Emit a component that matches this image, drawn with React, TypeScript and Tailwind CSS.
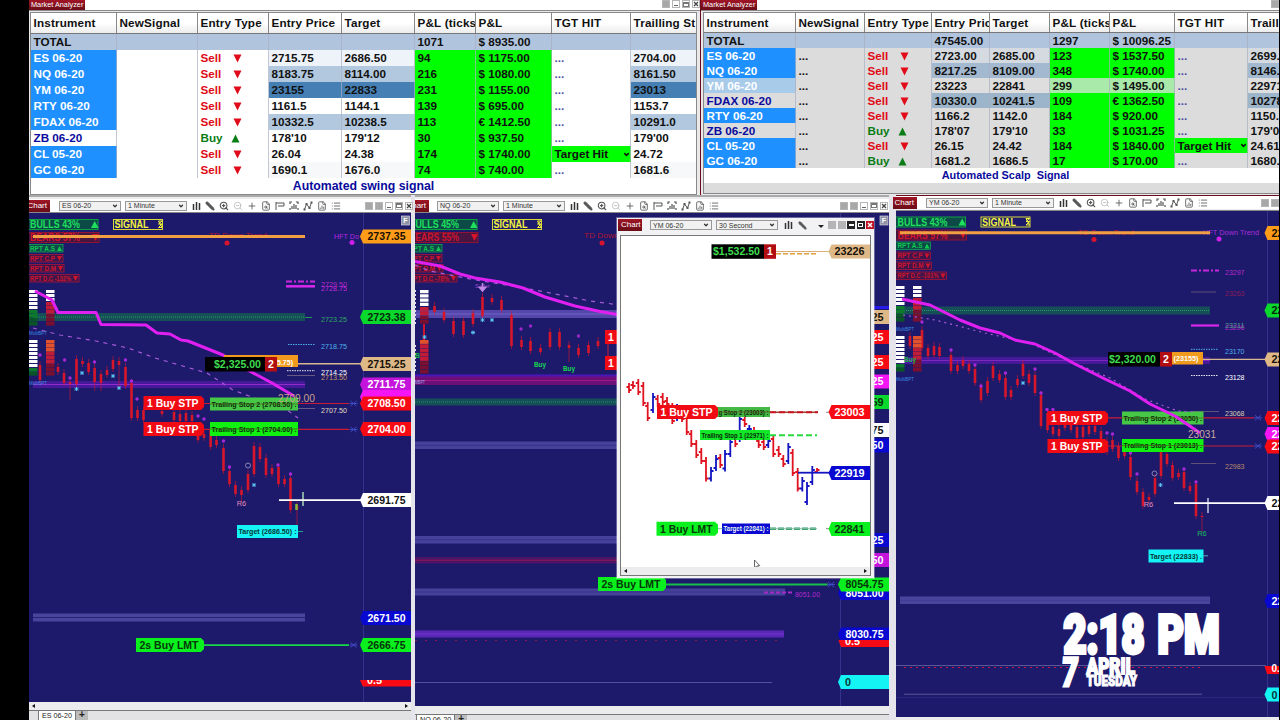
import React from 'react'
import { ChevronDown, FileChartColumn, FileSearch, List, Pencil, Plus, ZoomIn, ZoomOut } from 'lucide-react'

type Point = [number, number]
type Candle = [x: number, top: number, bottom: number, low?: number]

const FONT = '"Liberation Sans", Arial, sans-serif'
const NAVY = '#1d1a6c'

/* ---------- market analyzer tables ---------- */

interface Row {
    name: string
    side: 'Sell' | 'Buy'
    entry: string
    target: string
    ticks: string
    pnl: string
    hit?: boolean
    stop: string
    nameStyle: string
    tint: string
    pnlStyle?: string
}

const BLUE = 'bg-[#1e90ff] text-white'
const GREEN = 'bg-[#00ff00]'

const swingRows: Row[] = [
    { name: 'ES 06-20', side: 'Sell', entry: '2715.75', target: '2686.50', ticks: '94', pnl: '$ 1175.00', stop: '2704.00', nameStyle: BLUE, tint: 'bg-[#eef3fa]' },
    { name: 'NQ 06-20', side: 'Sell', entry: '8183.75', target: '8114.00', ticks: '216', pnl: '$ 1080.00', stop: '8161.50', nameStyle: BLUE, tint: 'bg-[#b2c8de]' },
    { name: 'YM 06-20', side: 'Sell', entry: '23155', target: '22833', ticks: '231', pnl: '$ 1155.00', stop: '23013', nameStyle: BLUE, tint: 'bg-[#457fb3]' },
    { name: 'RTY 06-20', side: 'Sell', entry: '1161.5', target: '1144.1', ticks: '139', pnl: '$ 695.00', stop: '1153.7', nameStyle: BLUE, tint: 'bg-white' },
    { name: 'FDAX 06-20', side: 'Sell', entry: '10332.5', target: '10238.5', ticks: '113', pnl: '€ 1412.50', stop: '10291.0', nameStyle: BLUE, tint: 'bg-[#b2c8de]' },
    { name: 'ZB 06-20', side: 'Buy', entry: "178'10", target: "179'12", ticks: '30', pnl: '$ 937.50', stop: "179'00", nameStyle: 'bg-white text-[#0a0a9c]', tint: 'bg-white' },
    { name: 'CL 05-20', side: 'Sell', entry: '26.04', target: '24.38', ticks: '174', pnl: '$ 1740.00', hit: true, stop: '24.72', nameStyle: BLUE, tint: 'bg-white' },
    { name: 'GC 06-20', side: 'Sell', entry: '1690.1', target: '1676.0', ticks: '74', pnl: '$ 740.00', stop: '1681.6', nameStyle: BLUE, tint: 'bg-[#f7f8f9]' },
]

const scalpRows: Row[] = [
    { name: 'ES 06-20', side: 'Sell', entry: '2723.00', target: '2685.00', ticks: '123', pnl: '$ 1537.50', stop: '2699.', nameStyle: BLUE, tint: 'bg-[#d5dae0]' },
    { name: 'NQ 06-20', side: 'Sell', entry: '8217.25', target: '8109.00', ticks: '348', pnl: '$ 1740.00', stop: '8146.', nameStyle: BLUE, tint: 'bg-[#a3b9cf]' },
    { name: 'YM 06-20', side: 'Sell', entry: '23223', target: '22841', ticks: '299', pnl: '$ 1495.00', stop: '22971', nameStyle: 'bg-[#a9cbea] text-white', tint: 'bg-[#dedede]', pnlStyle: 'bg-[#a9e9a9]' },
    { name: 'FDAX 06-20', side: 'Sell', entry: '10330.0', target: '10241.5', ticks: '109', pnl: '€ 1362.50', stop: '10278', nameStyle: 'text-[#0a0a9c]', tint: 'bg-[#9db5ca]' },
    { name: 'RTY 06-20', side: 'Sell', entry: '1166.2', target: '1142.0', ticks: '184', pnl: '$ 920.00', stop: '1150.', nameStyle: BLUE, tint: '' },
    { name: 'ZB 06-20', side: 'Buy', entry: "178'07", target: "179'10", ticks: '33', pnl: '$ 1031.25', stop: "179'0", nameStyle: 'text-[#0a0a9c]', tint: '' },
    { name: 'CL 05-20', side: 'Sell', entry: '26.15', target: '24.42', ticks: '184', pnl: '$ 1840.00', hit: true, stop: '24.61', nameStyle: BLUE, tint: '' },
    { name: 'GC 06-20', side: 'Buy', entry: '1681.2', target: '1686.5', ticks: '17', pnl: '$ 170.00', stop: '1680.', nameStyle: BLUE, tint: '' },
]

const headers = ['Instrument', 'NewSignal', 'Entry Type', 'Entry Price', 'Target', 'P&L (ticks)', 'P&L', 'TGT HIT', 'Trailling St']

const Cell: React.FC<{ className?: string; children?: React.ReactNode }> = ({ className = '', children }) => (
    <div className={`overflow-hidden whitespace-pre border-r border-[#a9aec0]/70 pl-[2.5px] ${className}`}>{children}</div>
)

interface AnalyzerProps {
    rows: Row[]
    cols: string
    rowClass: string
    headClass: string
    total: [string, string, string]
    signal: string
    signalClass: string
    bodyClass: string
}

const AnalyzerTable: React.FC<AnalyzerProps> = ({ rows, cols, rowClass, headClass, total, signal, signalClass, bodyClass }) => (
    <div className="overflow-hidden text-[11.7px] font-bold text-[#111]">
        <div className={`grid ${cols} ${headClass} border-b border-[#777] bg-gradient-to-b from-white from-50% to-[#ececec] tracking-[0.18px]`}>
            {headers.map((h) => <Cell key={h} className="border-[#888]!">{h}</Cell>)}
        </div>
        <div className={`grid ${cols} ${rowClass} bg-[#b0c4de]`}>
            <Cell>TOTAL</Cell><Cell /><Cell />
            <Cell>{total[0]}</Cell>
            <Cell />
            <Cell>{total[1]}</Cell>
            <Cell>{total[2]}</Cell>
            <Cell /><Cell />
        </div>
        <div className={bodyClass}>
            {rows.map((r) => (
                <div key={r.name} className={`grid ${cols} ${rowClass}`}>
                    <Cell className={r.nameStyle}>{r.name}</Cell>
                    <Cell>{bodyClass === 'bg-white' ? '' : '...'}</Cell>
                    <Cell className={r.side === 'Sell' ? 'text-[#e00a18]' : 'text-[#0a7d14]'}>
                        {r.side}
                        <svg className={`inline ${r.side === 'Sell' ? 'ml-3' : 'ml-2'}`} width="9" height="9" viewBox="0 0 9 9">
                            <path d={r.side === 'Sell' ? 'M.5 .5h8L4.5 8.5z' : 'M.5 8.5h8L4.5 .5z'} fill="currentColor" />
                        </svg>
                    </Cell>
                    <Cell className={r.tint}>{r.entry}</Cell>
                    <Cell className={r.tint}>{r.target}</Cell>
                    <Cell className={r.pnlStyle ?? GREEN}>{r.ticks}</Cell>
                    <Cell className={r.pnlStyle ?? GREEN}>{r.pnl}</Cell>
                    <Cell className={r.hit ? `${GREEN} flex items-center justify-between` : 'text-[#4a4aa0]'}>
                        {r.hit ? <>Target Hit<ChevronDown size={7} strokeWidth={5} className="shrink-0" /></> : '...'}
                    </Cell>
                    <Cell className={r.tint}>{r.stop}</Cell>
                </div>
            ))}
        </div>
        <div className={`${rowClass} ${signalClass} bg-white text-center whitespace-pre text-[#0a0a9c]`}>{signal}</div>
    </div>
)

type ButtonKind = 'blank' | 'min' | 'max' | 'close'

const WindowButtons: React.FC<{ kinds: ButtonKind[] }> = ({ kinds }) => (
    <div className="flex gap-[2px]">
        {kinds.map((k, i) => (
            <div
                key={i}
                className={`flex h-[8px] w-[8px] items-center justify-center border border-[#b5b5b5] ${k === 'blank' ? 'bg-[#a8a8a8]' : 'bg-white'}`}
            >
                {k === 'min' && <span className="mt-[3px] h-px w-1 bg-[#666]" />}
                {k === 'max' && <span className="h-[5px] w-[6px] border border-t-2 border-[#777]" />}
                {k === 'close' && <svg width="6" height="6" viewBox="0 0 6 6"><path d="M1 1l4 4M5 1L1 5" stroke="#444" strokeWidth="1.3" /></svg>}
            </div>
        ))}
    </div>
)

const WindowTitle: React.FC<{ kinds: ButtonKind[] }> = ({ kinds }) => (
    <div className="flex h-[11px] shrink-0 items-start justify-between border-b border-[#8a8a8a] bg-white">
        <div className="h-[10px] w-[56px] bg-gradient-to-b from-[#a01526] to-[#6b0d18] pl-[2px] text-[7.3px] leading-[9px] whitespace-nowrap text-white">Market Analyzer</div>
        <WindowButtons kinds={kinds} />
    </div>
)

/* ---------- chart toolbar ---------- */

const Select: React.FC<{ label: string }> = ({ label }) => (
    <div className="flex h-[10px] w-[62px] shrink-0 items-center justify-between border border-[#999] bg-[#f1f1f1] pr-[2px] pl-[2px] text-[7px] leading-none text-[#333]">
        <span>{label}</span>
        <ChevronDown size={6} strokeWidth={5} />
    </div>
)

const Bars = () => (
    <svg width="9" height="10" viewBox="0 0 9 10"><path d="M1.5 3v6M4.5 1v8M7.5 2v7" stroke="#333" strokeWidth="1.5" /></svg>
)

const Tools = () => (
    <div className="flex shrink-0 items-center gap-[4px] text-[#555]">
        <Bars />
        <Pencil className="-scale-x-100" size={10} fill="currentColor" />
        <ZoomIn size={10} strokeWidth={2.6} />
        <ZoomOut size={10} className="text-[#bbb]" />
        <Plus size={10} strokeWidth={2} />
        <FileSearch size={10} />
        <svg width="10" height="10" viewBox="0 0 10 10"><path d="M1 9V1M1 2h8v3H3" fill="none" stroke="currentColor" /></svg>
        <svg width="10" height="10" viewBox="0 0 10 10"><path d="M1 3V1h2M7 1h2v2M1 7v2M9 7v2M3 8V5M5 8V3M7 8V4" fill="none" stroke="currentColor" strokeWidth="1.2" /></svg>
        <svg width="10" height="10" viewBox="0 0 10 10">
            <path d="M1.500 8.500L3.500 3l3 4 2-5.500" fill="none" stroke="currentColor" />
            <path d="M.5 7.500h2v2h-2zM2.500 2h2v2h-2zM5.500 6h2v2h-2zM7.500 .5h2v2h-2z" fill="currentColor" />
        </svg>
        <FileChartColumn size={10} />
        <List size={10} />
    </div>
)

interface ToolbarProps {
    symbol: string
    tab: string
    selects: string
    right: string
    kinds: ButtonKind[]
}

const Toolbar: React.FC<ToolbarProps> = ({ symbol, tab, selects, right, kinds }) => (
    <div className="flex h-[13px] shrink-0 items-center bg-white">
        <div className={`${tab} flex h-[12px] shrink-0 justify-end overflow-hidden bg-gradient-to-b from-[#a01526] to-[#6b0d18] pr-[3px] text-[8px] leading-[12px] text-white`}>
            Chart
        </div>
        <div className={`${selects} flex gap-[4px]`}>
            <Select label={symbol} />
            <Select label="1 Minute" />
        </div>
        <div className="ml-[5px]"><Tools /></div>
        <div className={`${right} ml-auto`}><WindowButtons kinds={kinds} /></div>
    </div>
)

/* ---------- chart primitives ---------- */

interface LabelProps {
    x: number
    y: number
    w?: number
    size?: number
    fill?: string
    bold?: boolean
    anchor?: 'start' | 'middle' | 'end'
    children: string
}

const Label: React.FC<LabelProps> = ({ x, y, w, size = 7.3, fill = '#fff', bold, anchor = 'start', children }) => (
    <text x={x} y={y} textLength={w} lengthAdjust="spacingAndGlyphs" fontSize={size} fill={fill} fontWeight={bold ? 700 : 400} textAnchor={anchor}>{children}</text>
)

const PriceTag: React.FC<{ x: number; y: number; right: number; fill: string; color?: string; text?: string; h?: number }> = ({ x, y, right, fill, color = '#fff', text = '', h = 14 }) => (
    <g>
        <path d={`M${x} ${y + h / 2}l3 ${-h / 2}H${right}v${h}H${x + 3}z`} fill={fill} />
        {text && <Label x={right - 5.5} y={y + h / 2 + 3.9} w={text.length === 7 ? 38 : undefined} size={10.8} bold fill={color} anchor="end">{text}</Label>}
    </g>
)

const OrderLabel: React.FC<{ x: number; y: number; right: number; fill: string; color?: string; text: string }> = ({ x, y, right, fill, color = '#fff', text }) => (
    <g>
        <path d={`M${x} ${y}H${right - 3}l3 3v8l-3 3H${x}z`} fill={fill} />
        <Label x={x + 3.5} y={y + 11} w={right - x - 9} size={10.8} bold fill={color}>{text}</Label>
    </g>
)

const StopBox: React.FC<{ x: number; y: number; w: number; h?: number; fill: string; color?: string; text: string; line?: string }> = ({ x, y, w, h = 13, fill, color = '#0a2a0a', text, line }) => (
    <g>
        <rect x={x} y={y} width={w} height={h} fill={fill} />
        <Label x={x + 1.5} y={y + h / 2 + 2.7} w={w - 3} size={7.3} bold fill={color}>{text}</Label>
        {line && <path d={`M${x} ${y + h / 2}h${w}`} stroke={line} strokeWidth=".7" />}
    </g>
)

const Profit: React.FC<{ x: number; y: number; w: number; text: string; qty: string }> = ({ x, y, w, text, qty }) => (
    <g>
        <rect x={x} y={y} width={w} height="14.5" fill="#000" />
        <rect x={x + w} y={y} width="12" height="14.5" fill="#b30d14" />
        <Label x={x + w - 4} y={y + 11} w={47} size={10.5} bold fill="#3fdc50" anchor="end">{text}</Label>
        <Label x={x + w + 6} y={y + 11} size={10.5} bold anchor="middle">{qty}</Label>
    </g>
)

const Band: React.FC<{ x: number; right: number; y: number; h?: number; fill: string; line?: string; dotted?: boolean }> = ({ x, right, y, h = 8, fill, line = NAVY, dotted }) => (
    <g>
        <rect x={x} y={y} width={right - x} height={h} fill={fill} />
        <path d={`M${x} ${y + h / 2}H${right}`} stroke={line} strokeDasharray={dotted ? '1 1' : undefined} strokeWidth=".8" />
    </g>
)

const Candles: React.FC<{ data: Candle[] }> = ({ data }) => (
    <g stroke="#d8162a">
        {data.map(([x, top, bottom, low], i) => (
            <g key={i}>
                <path d={`M${x} ${top - 4}V${low ?? bottom + 3}`} strokeWidth=".6" />
                <path d={`M${x} ${top}V${bottom}`} strokeWidth="2.6" />
            </g>
        ))}
    </g>
)

const Dots: React.FC<{ data: Point[]; fill: string }> = ({ data, fill }) => (
    <g fill={fill}>{data.map(([x, y], i) => <circle key={i} cx={x} cy={y} r="1.7" />)}</g>
)

const Stars: React.FC<{ data: Point[] }> = ({ data }) => (
    <g stroke="#5cc8f5" strokeWidth=".9">
        {data.map(([x, y], i) => <path key={i} d={`M${x - 2} ${y}h4M${x} ${y - 2}v4M${x - 1.5} ${y - 1.5}l3 3M${x + 1.5} ${y - 1.5}l-3 3`} />)}
    </g>
)

const CloseMark: React.FC<{ x: number; y: number }> = ({ x, y }) => (
    <path d={`M${x - 3} ${y - 2.5}l6 5M${x + 3} ${y - 2.5}l-6 5M${x - 4} ${y}h8`} stroke="#3f4bc0" />
)

const Trend: React.FC<{ points: string; dashed?: boolean; dash?: string }> = ({ points, dashed, dash = '4 5' }) => (
    <polyline points={points} fill="none" stroke={dashed ? '#a65ad6' : '#e020f0'} strokeWidth={dashed ? 1.2 : 3} strokeDasharray={dashed ? dash : undefined} strokeLinejoin="round" />
)

// Striped strength meter: solid blocks with thin gaps between
const Meter: React.FC<{ x: number; y: number; h: number; colors: string[] }> = ({ x, y, h, colors }) => (
    <g>
        {colors.map((c, i) => (
            <rect key={i} x={x} y={y + (i * h) / colors.length} width="8.5" height={h / colors.length - (c === '#fff' ? 1 : 0.4)} fill={c} />
        ))}
    </g>
)

const W = '#fff'
const G1 = '#0c7a2a'
const G2 = '#0a5526'
const R1 = '#c01c38'
const R2 = '#7a1030'
const O1 = '#e2502c'

const Meters: React.FC<{ x: number; y: number }> = ({ x, y }) => (
    <g>
        <Meter x={x} y={y} h={36} colors={[W, W, W, W, W, G1, G1, G2, G2]} />
        <Meter x={x + 17} y={y} h={36} colors={[W, W, W, R1, R1, R1, R2, R2, R2]} />
        <Meter x={x} y={y + 50} h={36} colors={[W, W, W, W, W, W, W, G1, G2]} />
        <Meter x={x + 17} y={y + 50} h={36} colors={[O1, O1, O1, R1, R1, R1, R2, R2, R2]} />
        <Label x={x} y={y + 45} w={18} size={5.5} fill="#3a8be0">MultiBPT</Label>
        <Label x={x} y={y + 95} w={18} size={5.5} fill="#3a8be0">MultiBPT</Label>
    </g>
)

const badges = [
    { text: 'RPT A.S', w: 34, color: '#12c850', up: true },
    { text: 'RPT C.P', w: 34, color: '#d0142c' },
    { text: 'RPT D.M', w: 35, color: '#d0142c' },
]

// Sentiment block in the chart's upper left corner
const Sentiment: React.FC<{ x: number; y: number; bulls: string; bears: string; dc: string; dcWidth?: number }> = ({ x, y, bulls, bears, dc, dcWidth = 50 }) => (
    <g transform={`translate(${x} ${y})`}>
        <rect x="-1" y=".5" width="70" height="10" fill="#0c4a48" stroke="#11a040" />
        <Label x={1} y={9.3} w={50} size={10.3} bold fill="#1fe05c">{bulls}</Label>
        <path d="M62 9h7.500l-3.800-7z" fill="#1fe05c" />
        <rect x="84.500" y=".5" width="49" height="10" fill="none" stroke="#d8d83c" />
        <Label x={85.5} y={9.3} w={34} size={10.3} bold fill="#f4f43a">SIGNAL</Label>
        <path d="M129.500 2h3.500l-3.500 3h3.500l-3.500 3.500h3.500z" fill="none" stroke="#f4f43a" />
        <rect x="-1" y="13.500" width="71" height="10" fill="#471542" stroke="#8f1434" />
        <Label x={1} y={22.3} w={50} size={10.3} bold fill="#d0142c">{bears}</Label>
        <path d="M63 15h7l-3.500 7z" fill="#d8142c" />
        {[...badges, { text: dc, w: dcWidth, color: '#d0142c', up: false }].map((b, i) => (
            <g key={i} transform={`translate(0 ${25.5 + i * 10})`}>
                <rect x="-1" y="0" width={b.w + 1} height="7.500" fill={b.up ? '#0c4a48' : '#40154a'} stroke={b.color} strokeWidth=".6" />
                <Label x={1} y={6.4} w={b.w - 9} size={6.8} bold fill={b.color}>{b.text}</Label>
                <path d={b.up ? `M${b.w - 6} 6.500h5l-2.500-5z` : `M${b.w - 6} 1.500h5l-2.500 5z`} fill={b.color} />
            </g>
        ))}
    </g>
)

const FButton: React.FC<{ x: number; y: number }> = ({ x, y }) => (
    <g>
        <rect x={x} y={y} width="8" height="9" fill="#8f93a8" stroke="#d5d5e0" strokeWidth=".7" />
        <Label x={x + 4} y={y + 7} size={7} bold anchor="middle">F</Label>
    </g>
)

/* ---------- ES chart ---------- */

const esCandles: Candle[] = [
    [40, 365, 380], [58, 367, 372], [64, 373, 383], [70, 382, 384, 400], [76.5, 359, 384], [82.500, 361, 364], [88.600, 363, 372],
    [94.600, 368, 382, 391], [101, 374, 383, 391], [107, 370, 375], [113, 360, 369], [119, 361, 365, 388], [125.500, 367, 386], [131.500, 383, 418],
    [137.500, 410, 418], [143.500, 410, 420], [162, 411, 414], [174, 412, 420], [180, 414, 421], [186, 413, 421], [192, 415, 421],
    [198, 432, 440], [204, 434, 438], [210.600, 430, 447], [216.500, 440, 445], [223.500, 448, 471], [229.500, 471, 484], [235.500, 485, 494],
    [241.500, 490, 495, 502], [248, 474, 490], [254, 446, 474], [260, 447, 459], [266, 458, 475], [272, 468, 474], [278.500, 467, 484],
    [284.500, 479, 484], [290.500, 478, 510], [297, 506, 509, 527],
]

const EsChart = () => (
    <svg className="block shrink-0" width="382" height="489" viewBox="29 213 382 489" fontFamily={FONT}>
        <rect x="29" y="213" width="382" height="489" fill={NAVY} />
        <path d="M363.500 213V702" stroke="#34328a" />
        <Sentiment x={29} y={219} bulls="BULLS 43%" bears="BEARS 57%" dc="RPT D.C -132%" />
        <Label x={209} y={238} w={58} fill="#b0162c">TD Down Trend</Label>
        <path d="M33 236.500H305" stroke="#f0a042" strokeWidth="3" />
        <circle cx="227" cy="243" r="2.500" fill="#d8142c" />
        <Label x={334} y={238.5} w={25} fill="#b428e0">HFT Do</Label>
        <circle cx="352" cy="242.500" r="2.500" fill="#d020e8" />
        <Band x={33} right={305} y={313} fill="#174f58" line="#22b060" dotted />
        <path d="M305 317.500h7" stroke="#1c9a50" />
        <Band x={33} right={305} y={381} h={7} fill="#46189a" line="#a434d8" />
        <Band x={33} right={305} y={613.500} h={8} fill="#4a459c" />
        <Candles data={esCandles} />
        <Meters x={29} y={290} />
        <Dots fill="#a828d8" data={[[40, 355], [64.600, 360], [70, 378], [94.500, 362], [125.500, 360], [131.500, 381], [137, 399], [198, 416], [204, 419], [223.500, 441], [229.500, 467], [278, 465], [290.500, 474]]} />
        <Stars data={[[76.500, 389], [82, 373], [113, 376], [119, 388], [254, 485]]} />
        <circle cx="248" cy="465.500" r="2.500" fill="none" stroke="#8a86b8" />
        <Label x={241.500} y={506} size={7.5} fill="#e08ab8" anchor="middle">R6</Label>
        <path d="M303 492V506" stroke="#a8d8b8" strokeWidth="1.500" />
        <path d="M296.500 504v6" stroke="#86b83a" strokeWidth="2.500" />
        <Trend dashed points="33,328 60,335 96,341 128,348 155,358 207,373 233,390 260,400 287,410 298,418" />
        <Trend points="35,291 52,300 58,312.500 96,312.500 101,324.500 146,325 157,333 170,334 181,340 188,341 223,355 244,368 272,383 294,396" />

        <path d="M286 281.500h29" stroke="#c828dc" strokeWidth="1.800" strokeDasharray="6 2 2 2" />
        <path d="M286 286.300h29" stroke="#d828ec" strokeWidth="2.500" />
        <path d="M288 344.500h27" stroke="#4cb0e8" strokeDasharray="1.500 1" />
        <path d="M287 370.700h28" stroke="#e8e8f4" strokeDasharray="1.500 1" />
        <path d="M287 375.500h28M288 408.500h27" stroke="#7c6a8c" strokeWidth=".8" />
        <Label x={321} y={286.500} w={26} fill="#b428c8">2729.50</Label>
        <Label x={321} y={290.500} w={26} fill="#c828dc">2728.75</Label>
        <Label x={321} y={322} w={26} fill="#2ca85c">2723.25</Label>
        <Label x={321} y={348.500} w={26} fill="#4cb0e8">2718.75</Label>
        <Label x={321} y={379.800} w={26} fill="#c89a6a">2713.50</Label>
        <Label x={321} y={374.800} w={26}>2714.25</Label>
        <Label x={321} y={413.300} w={26} fill="#e4dcc0">2707.50</Label>

        <path d="M298 363.800H362" stroke="#d8b890" strokeWidth="1.500" />
        <rect x="224" y="355" width="74" height="12" fill="#f09a1e" />
        <Label x={277} y={364.500} w={16} size={7} bold>5.75)</Label>
        <Profit x={205} y={357} w={60} text="$2,325.00" qty="2" />

        <path d="M204 403.500H349M204 429.300H349" stroke="#c81c34" strokeWidth="1.200" />
        <StopBox x={210} y={397.500} w={88} fill="#46c846" text="Trailing Stop 2 (2708.50) ." line="#4f5a18" />
        <StopBox x={210} y={422} w={88} h={14} fill="#12f012" text="Trailing Stop 1 (2704.00) ." line="#4f5a18" />
        <Label x={278} y={402} w={37} size={10.500} fill="#c8a088">2709.00</Label>
        <OrderLabel x={143.500} y={396} right={204} fill="#f00a14" text="1 Buy STP" />
        <OrderLabel x={143.500} y={422} right={204} fill="#f00a14" text="1 Buy STP" />
        <CloseMark x={353.500} y={403.500} />
        <CloseMark x={353.500} y={429.500} />
        <path d="M279 500.200H362" stroke="#fff" strokeWidth="1.800" />
        <StopBox x={237} y={525} w={61} fill="#14f4f4" color="#063434" text="Target (2686.50) :" />
        <path d="M298 531.500h5" stroke="#18a890" />
        <path d="M204 645.200H349" stroke="#18d84a" strokeWidth="1.800" />
        <OrderLabel x={136} y={638} right={204} fill="#0af01e" color="#06360a" text="2s Buy LMT" />
        <CloseMark x={353.500} y={645} />

        <PriceTag x={360} y={229.500} right={411} fill="#ff9d1a" color="#1a1000" text="2737.35" />
        <PriceTag x={360} y={310} right={411} fill="#0ad82c" color="#02280a" text="2723.38" />
        <PriceTag x={360} y={357} right={411} fill="#deb887" color="#18120a" text="2715.25" />
        <PriceTag x={360} y={377.500} right={411} fill="#c414dc" text="2711.75" />
        <PriceTag x={360} y={390} right={411} fill="#f414f4" />
        <PriceTag x={360} y={396.500} right={411} fill="#f80a14" text="2708.50" />
        <PriceTag x={360} y={422} right={411} fill="#f80a14" text="2704.00" />
        <PriceTag x={360} y={493} right={411} fill="#fff" color="#111" text="2691.75" />
        <PriceTag x={360} y={611} right={411} fill="#0808d0" text="2671.50" />
        <PriceTag x={360} y={638} right={411} fill="#0af01e" color="#06360a" text="2666.75" />
        <svg x="360" y="680" width="51" height="6.500" viewBox="360 680 51 6.500">
            <path d="M360 680H411V687H363z" fill="#f80a14" />
            <Label x={367} y={684} size={10.800} bold>0.5</Label>
        </svg>
        <FButton x={401.500} y={216} />
    </svg>
)

/* ---------- NQ chart ---------- */

const nqCandles: Candle[] = [
    [434.500, 306, 312], [444, 312, 320], [453.500, 321, 334], [463.500, 321, 335], [473, 313, 324], [482.500, 297, 316], [492, 298, 302],
    [501.500, 300, 310], [511.500, 315, 346], [521.500, 340, 347], [530.500, 341, 351], [540.500, 348, 352], [550, 332, 347], [559.500, 332, 347],
    [569, 345, 348, 362], [578.500, 348, 355], [588.500, 345, 353], [598, 341, 346],
]

const NqChart = () => (
    <svg className="block shrink-0" width="474" height="493" viewBox="415 213 474 493" fontFamily={FONT}>
        <rect x="415" y="213" width="474" height="493" fill={NAVY} />
        <path d="M840.500 213V706" stroke="#34328a" />
        <Band x={415} right={620} y={310} fill="#5546ac" line="#7a6ac8" />
        <Band x={415} right={620} y={376} h={9} fill="#6c1078" line="#b01890" />
        <path d="M415 375.500H620" stroke="#4c16b8" strokeWidth="2" />
        <Band x={415} right={620} y={398.500} h={7} fill="#174f58" line="#22a060" dotted />
        <Band x={415} right={620} y={441.500} h={7.500} fill="#46429a" line="#34308a" />
        <Band x={415} right={620} y={536} h={7.500} fill="#46429a" line="#34308a" />
        <Band x={415} right={620} y={557} h={6.500} fill="#4c1464" line="#9c1850" />
        <Band x={415} right={785} y={588.500} h={7} fill="#46429a" line="#34308a" />
        <Band x={415} right={784} y={630.500} h={7} fill="#5a28b8" line="#7638cc" />
        <path d="M415 640.500H784" stroke="#8a1450" strokeDasharray="2 8" />
        <path d="M415 682.500H772" stroke="#5450a0" />
        <Sentiment x={408} y={219} bulls="BULLS 45%" bears="BEARS 55%" dc="RPT D.C -78%" dcWidth={49} />
        <Label x={584} y={238} w={58} fill="#b0162c">TD Down Trend</Label>
        <circle cx="602" cy="243" r="2.500" fill="#d8142c" />
        <Candles data={nqCandles} />
        <Meter x={420} y={290} h={34} colors={[W, W, W, W, R1, R1, R2, R2]} />
        <Meter x={420} y={340} h={34} colors={[O1, R1, R1, R1, R1, R2, R2, R2]} />
        <path d="M415.500 290V325M415.500 345V372" stroke="#dcdcf4" strokeDasharray="2 2" />
        <path d="M424 324v16" stroke="#d0142c" strokeWidth="2" />
        <Label x={415} y={358} size={7} bold fill="#18b848">B</Label>
        <Label x={415} y={384} w={10} size={5} fill="#9aa0e0">MBPT</Label>
        <Dots fill="#9a28c8" data={[[521, 329], [530.500, 326], [578.500, 336]]} />
        <Stars data={[[473, 332.500], [482.500, 320], [492, 320], [424.500, 337]]} />
        <Label x={475} y={288} w={15} size={5.500} fill="#a050d0">Seller</Label>
        <path d="M482.500 283v6M479.500 287.500l3 3.500 3-3.500z" fill="#c48ae8" stroke="#c48ae8" strokeWidth="1.500" />
        <Label x={534} y={367} w={12} bold fill="#18d850">Buy</Label>
        <Label x={563} y={370.500} w={12} bold fill="#18d850">Buy</Label>
        <Trend dashed points="415,265 430,271 465,278 535,290 560,295 590,301 620,305" />
        <Trend points="415,261.500 440,266 460,274 475,278 500,282 523,288 545,297 575,306 600,311.500 620,315" />
        {[330, 356].map((y) => (
            <g key={y}>
                <rect x="605" y={y} width="15" height="14" fill="#f00a14" />
                <Label x={611} y={y + 11} size={10.500} bold anchor="middle">1</Label>
            </g>
        ))}
        <path d="M608 344v12" stroke="#c81c34" />

        <path d="M870 307.500h19" stroke="#2a1ce8" strokeWidth="3" />
        <PriceTag x={838} y={310} right={889} fill="#deb887" color="#18120a" text="25" />
        <PriceTag x={838} y={330} right={889} fill="#f80a14" text="25" />
        <PriceTag x={838} y={355} right={889} fill="#f80a14" text="25" />
        <PriceTag x={838} y={374.500} right={889} fill="#f414f4" text="25" />
        <PriceTag x={838} y={395} right={889} fill="#0ad82c" color="#02280a" text="59" />
        <PriceTag x={838} y={423} right={889} fill="#fff" color="#111" text="75" />
        <PriceTag x={838} y={438.500} right={889} fill="#0808d0" text="50" />
        <PriceTag x={838} y={533} right={889} fill="#0808d0" text="25" />
        <PriceTag x={838} y={553} right={889} fill="#c414dc" text="50" />
        <PriceTag x={838} y={586} right={889} fill="#0808d0" text="8051.00" />
        <PriceTag x={838} y={577.500} right={889} fill="#0af01e" color="#06360a" text="8054.75" />
        <PriceTag x={838} y={627.500} right={889} fill="#0808d0" text="8030.75" />
        <svg x="838" y="640" width="51" height="7" viewBox="838 640 51 7">
            <path d="M838 639H889V647H841z" fill="#f80a14" />
            <Label x={845} y={644.500} size={10.800} bold>0.5</Label>
        </svg>
        <PriceTag x={838} y={675} right={889} fill="#14f4f4" />
        <Label x={845} y={686} size={10.800} bold fill="#063434">0</Label>

        <path d="M665 584.500H828" stroke="#18c04a" strokeWidth="1.800" />
        <OrderLabel x={598} y={577} right={666} fill="#0af01e" color="#06360a" text="2s Buy LMT" />
        <CloseMark x={831} y={584.500} />
        <path d="M764 592.500h28" stroke="#a828c8" strokeWidth="2" strokeDasharray="4 2" />
        <Label x={795} y={596.500} w={25} fill="#b428c8">8051.00</Label>
        <FButton x={880} y={216} />
    </svg>
)

/* ---------- YM 1 minute chart ---------- */

const ymCandles: Candle[] = [
    [910, 336, 346], [922, 330, 348], [928, 348, 356], [934, 346, 355], [939.500, 347, 356], [951, 355, 371], [957.500, 365, 371], [963, 360, 366],
    [969, 364, 371], [975, 369, 383], [981, 387, 400], [987.500, 381, 393], [993, 366, 378], [999.500, 374, 380], [1005.500, 378, 397],
    [1011, 390, 397], [1017.500, 379, 385], [1023, 364, 376], [1029, 374, 383], [1035, 375, 393], [1041, 395, 426], [1047.500, 413, 430],
    [1053, 427, 434], [1059, 429, 436], [1065, 424, 428], [1071, 423, 430], [1077, 427, 438], [1083, 427, 437], [1089, 426, 434],
    [1095, 426, 432], [1101, 431, 440], [1107, 441, 452], [1112.500, 440, 449], [1118.500, 446, 458], [1124.500, 452, 456], [1130.500, 457, 477],
    [1137, 481, 492], [1143, 492, 506], [1149, 497, 500], [1155, 478, 494], [1161, 452, 476], [1167, 454, 464], [1172.500, 465, 478],
    [1178.500, 473, 477], [1184, 472, 488], [1190, 486, 491], [1196, 484, 516], [1202, 516, 517, 532],
]

const tagNumbers: [number, string][] = [
    [237, '#1a1000'], [314.300, '#02280a'], [363.300, '#18120a'], [421.800, '#fff'], [438, '#fff'], [450.300, '#fff'], [507, '#111'], [605, '#fff'],
]

const YmChart = () => (
    <svg className="block shrink-0" width="383" height="506" viewBox="896 211 383 506" fontFamily={FONT}>
        <rect x="896" y="211" width="383" height="506" fill={NAVY} />
        <path d="M1267.500 211V717" stroke="#34328a" />
        <Sentiment x={896.500} y={216.500} bulls="BULLS 43%" bears="BEARS 57%" dc="RPT D.C -101%" />
        <Label x={1078} y={234.5} w={56} fill="#b0162c">TD Down Trend</Label>
        <Label x={1203} y={235.300} w={56} fill="#a82cd8">HFT Down Trend</Label>
        <path d="M900 232.800H1210" stroke="#f0a042" strokeWidth="3" />
        <circle cx="1094" cy="239.500" r="2.500" fill="#d8142c" />
        <circle cx="1219" cy="239" r="2.500" fill="#d020e8" />
        <Band x={900} right={1210} y={306.500} fill="#174f58" line="#22b060" dotted />
        <Band x={900} right={1210} y={357} h={7} fill="#46189a" line="#8a2cc8" />
        <Band x={900} right={1210} y={596.500} h={7.500} fill="#4a459c" line="#3f3b92" />
        <Candles data={ymCandles} />
        <Meters x={896} y={286} />
        <Label x={904} y={361.500} w={12} bold fill="#18b848">Buy</Label>
        <Dots fill="#a828d8" data={[[922, 322], [951, 350], [975, 365], [981, 386], [1005.500, 373], [1035, 369], [1041, 393], [1047, 409.500], [1053, 409.500], [1107, 433], [1112.500, 434], [1130.500, 453], [1137, 474], [1184, 469], [1196, 482]]} />
        <Stars data={[[1023, 383], [1160.500, 485]]} />
        <circle cx="1154.500" cy="473.500" r="2.500" fill="none" stroke="#8a86b8" />
        <Label x={1148.500} y={506.500} size={7.5} fill="#e08ab8" anchor="middle">R6</Label>
        <Label x={1202} y={535.500} size={7.500} fill="#1cb85c" anchor="middle">R6</Label>
        <path d="M1208 498V513" stroke="#c4c8e4" strokeWidth="1.500" />
        <path d="M1191 270.500h28" stroke="#c828dc" strokeWidth="2" strokeDasharray="6 2 2 2" />
        <path d="M1191 325.500h28" stroke="#d828ec" strokeWidth="2.200" />
        <path d="M1191 349.300h27" stroke="#4cb0e8" strokeDasharray="1.500 1" />
        <path d="M1191 375.500h27" stroke="#e8e8f4" strokeDasharray="1.500 1" />
        <path d="M1191 292h25M1191 411.500h28M1191 463.500h25" stroke="#7c6a7c" strokeWidth=".7" />
        <Label x={1225} y={275} w={19.500} fill="#b428c8">23297</Label>
        <Label x={1225} y={296} w={19.500} fill="#8c1c58">23263</Label>
        <Label x={1225} y={329.500} w={19.500} fill="#b428c8">23206</Label>
        <Label x={1225} y={328} w={19.500} fill="#4c9a8c">23211</Label>
        <Label x={1225} y={353.500} w={19.500} fill="#4cb0e8">23170</Label>
        <Label x={1225} y={379.500} w={19.500}>23128</Label>
        <Label x={1225} y={416.300} w={19.500} fill="#d8ccb0">23068</Label>
        <Label x={1225} y={468.500} w={19.500} fill="#b88a6a">22983</Label>

        <path d="M1203 359.300H1267" stroke="#d8b890" strokeWidth="1.300" />
        <rect x="1172" y="352" width="31" height="12.500" fill="#f09a1e" />
        <Label x={1173.500} y={361} w={25} size={7} bold>(23155)</Label>

        <path d="M1107 417.800H1254M1107 446H1254" stroke="#c81c34" strokeWidth="1.200" />
        <StopBox x={1122} y={411.500} w={81.500} fill="#46c846" text="Trailing Stop 2 (23050) ." line="#4f5a18" />
        <StopBox x={1122} y={439} w={81.500} fill="#12f012" text="Trailing Stop 1 (23013) ." line="#4f5a18" />
        <Trend dashed dash="2 4" points="903,315 935,320 985,333 1030,343 1060,357 1110,378 1145,399 1178,411 1195,412" />
        <Trend points="902,299 930,305 960,320 980,328 1000,333 1015,340 1035,344 1055,353 1075,364 1105,379 1130,391 1150,404 1175,416 1200,433" />
        <Profit x={1108} y={352} w={52} text="$2,320.00" qty="2" />
        <Label x={1188} y={437.500} w={28} size={10.500} fill="#c8a8a0">23031</Label>
        <OrderLabel x={1047.500} y={411} right={1108} fill="#f00a14" text="1 Buy STP" />
        <OrderLabel x={1047.500} y={439} right={1108} fill="#f00a14" text="1 Buy STP" />
        <CloseMark x={1258} y={417.800} />
        <CloseMark x={1258} y={446} />
        <path d="M1174 503.200H1266" stroke="#fff" strokeWidth="1.800" />
        <StopBox x={1148.500} y={549.500} w={55} fill="#14f4f4" color="#063434" text="Target (22833) ." />
        <path d="M1203 555.800h5" stroke="#5cb0b8" />

        <path d="M896 665.500H1266M904 694.200H1202" stroke="#5a5698" />
        <path d="M904 667.500H1203" stroke="#c8143c" strokeWidth="1.200" strokeDasharray="2 4" />
        <path d="M896 697.500H1279" stroke="#2a287c" />

        <PriceTag x={1264.500} y={226} right={1285} fill="#ff9d1a" />
        <PriceTag x={1264.500} y={303.500} right={1285} fill="#0ad82c" />
        <PriceTag x={1264.500} y={352.500} right={1285} fill="#deb887" />
        <PriceTag x={1264.500} y={427} right={1285} fill="#f414f4" />
        <PriceTag x={1264.500} y={411} right={1285} fill="#f80a14" />
        <PriceTag x={1264.500} y={439.500} right={1285} fill="#f80a14" />
        <PriceTag x={1264.500} y={496} right={1285} fill="#fff" />
        <PriceTag x={1264.500} y={594} right={1285} fill="#0808d0" />
        <path d="M1264.500 666H1285V674H1267z" fill="#f80a14" />
        <PriceTag x={1264.500} y={687.500} right={1285} fill="#14f4f4" />
        {tagNumbers.map(([y, c]) => <Label key={y} x={1271.500} y={y} size={10.800} bold fill={c}>22</Label>)}
        <Label x={1271.500} y={672} size={10} bold>0.</Label>
        <Label x={1271.500} y={698.500} size={10.800} bold fill="#063434">0</Label>

        <g fill="#fff" stroke="#fff" strokeLinejoin="miter" fontFamily='Roboto, "Liberation Sans", sans-serif' fontWeight="900">
            <text x="1063.500" y="652.800" fontSize="54.500" strokeWidth="4" textLength="81" lengthAdjust="spacingAndGlyphs">2:18</text>
            <text x="1157.500" y="652.800" fontSize="54.500" strokeWidth="4" textLength="62" lengthAdjust="spacingAndGlyphs">PM</text>
            <text transform="translate(1061 685.500) skewX(-4)" fontSize="40" strokeWidth="2.800" textLength="16" lengthAdjust="spacingAndGlyphs">7</text>
            <text x="1086.500" y="673.500" fontSize="22.500" strokeWidth="1.800" textLength="48.500" lengthAdjust="spacingAndGlyphs">APRIL</text>
            <text x="1086.500" y="686.200" fontSize="15" strokeWidth="1.100" textLength="50.500" lengthAdjust="spacingAndGlyphs">TUESDAY</text>
        </g>
    </svg>
)

/* ---------- floating YM 30 second window ---------- */

// x, high, low, up bar?
const bars: [number, number, number, number][] = [
    [629, 383, 393, 0], [633, 381, 389, 0], [638.300, 379, 395, 0], [643.300, 382, 406, 0], [647.700, 402, 421, 0], [653, 393, 413, 1],
    [657.700, 395, 407, 0], [662.700, 393, 405, 0], [667, 397, 407, 0], [672.300, 403, 424, 0], [677, 404, 421, 1], [682, 407, 422, 0],
    [686.700, 413, 435, 0], [691.300, 430, 447, 0], [696.300, 440, 458, 0], [701.300, 448, 464, 0], [706, 457, 481.500, 0], [711, 467, 481.500, 1],
    [716, 455, 471, 1], [720.300, 454, 468, 0], [725, 450, 471.500, 1], [730.300, 438, 457, 1], [735.300, 433, 447, 0], [739.700, 415, 442, 1],
    [744.700, 416, 427, 0], [749.300, 425, 432, 1], [754, 427, 438, 0], [758.700, 437, 448, 0], [763.700, 438, 450, 0], [768.300, 437, 448, 1],
    [773.300, 435, 457, 0], [778.700, 446, 457, 0], [783.300, 455, 467, 0], [788.300, 443, 464, 1], [792.700, 449, 476, 0], [797.700, 468, 491.500, 0],
    [802.300, 477, 491.500, 1], [807, 482, 505, 1], [812.300, 466, 485, 1], [817, 468, 473, 0],
]

const FloatingWindow = () => (
    <div className="absolute top-[218px] left-[617px] flex h-[360px] w-[257px] flex-col bg-[#f2f2f4] shadow-[0_0_0_1px_#ffffff55]">
        <div className="flex h-[14px] items-center">
            <div className="ml-px h-[12px] w-[25px] bg-gradient-to-b from-[#a01526] to-[#6b0d18] pl-[3px] text-[8px] leading-[12px] text-white">Chart</div>
            <div className="ml-[8px] flex gap-[4px]">
                <Select label="YM 06-20" />
                <Select label="30 Second" />
            </div>
            <div className="ml-[6px] flex items-center gap-[5px] text-[#555]">
                <Bars />
                <Pencil className="-scale-x-100" size={9} fill="currentColor" />
            </div>
            <div className="mt-[2px] ml-[11px] border-x-[3px] border-t-[3px] border-x-transparent border-t-[#222]" />
            <div className="ml-[4px] flex gap-[1.5px]">
                <div className="h-[8px] w-[8px] bg-[#b5b5b5]" />
                <div className="h-[8px] w-[8px] bg-[#b5b5b5]" />
                <div className="flex h-[8px] w-[8px] items-center justify-center bg-[#222]"><span className="h-[2px] w-[5px] bg-white" /></div>
                <div className="flex h-[8px] w-[8px] items-center justify-center bg-[#222]"><span className="h-[4px] w-[5px] border border-white" /></div>
                <div className="flex h-[8px] w-[8px] items-center justify-center bg-[#c01424]">
                    <svg width="6" height="6" viewBox="0 0 6 6"><path d="M1 1l4 4M5 1L1 5" stroke="#fff" strokeWidth="1.5" /></svg>
                </div>
            </div>
        </div>
        <div className="mx-[3px] mt-[3px] flex h-[341px] flex-col border border-[#777] bg-white">
            <svg className="block" width="249" height="331" viewBox="621 236 249 331" fontFamily={FONT}>
                <g fill="none" strokeWidth="1.800">
                    {bars.map(([x, hi, lo, up]) => (
                        <path
                            key={x}
                            d={`M${x} ${hi}V${lo}M${x - 2.5} ${up ? lo - 3 : hi + 4}h2.500M${x} ${up ? hi + 4 : lo - 3}h2.500`}
                            stroke={up ? '#1414c0' : '#e01420'}
                        />
                    ))}
                </g>
                <path d="M776 251.500H831" stroke="#d8b078" />
                <path d="M776 253.800H817" stroke="#e0a040" strokeWidth="1.500" strokeDasharray="5 2" />
                <Profit x={711.500} y={244.300} w={52.500} text="$1,532.50" qty="1" />
                <PriceTag x={828.500} y={244.500} right={870} fill="#deb887" color="#18120a" text="23226" />
                <path d="M770 412.300H818" stroke="#a04030" strokeWidth="1.500" />
                <path d="M770 412.300H818" stroke="#c81420" strokeWidth="2" strokeDasharray="6 3" />
                <path d="M770 435.300H817" stroke="#28d840" strokeWidth="2" strokeDasharray="6 3" />
                <path d="M770 528.700H817" stroke="#2a9a6a" strokeWidth="2.500" strokeDasharray="6 2" />
                <path d="M717 528.700H817" stroke="#8ac0a0" />
                <path d="M826 412.300h4M826 528.700h4" stroke="#888" />
                <path d="M798 472.700H830" stroke="#1414c0" strokeWidth="1.800" />
                <StopBox x={717} y={407} w={53} h={10} fill="#44b844" text="g Stop 2 (23003) :" line="#6a4a20" />
                <StopBox x={700} y={430} w={70} h={10} fill="#12e828" text="Trailing Stop 1 (22971) :" />
                <OrderLabel x={657} y={405} right={718} fill="#f00a14" text="1 Buy STP" />
                <StopBox x={722} y={523.500} w={48} h={10.500} fill="#0808d0" color="#fff" text="Target (22841) :" line="#3a7ad0" />
                <OrderLabel x={656.500} y={521.700} right={718} fill="#0af01e" color="#06360a" text="1 Buy LMT" />
                <PriceTag x={828.500} y={405} right={870} fill="#f80a14" text="23003" />
                <PriceTag x={828.500} y={466} right={870} fill="#0808d0" text="22919" />
                <PriceTag x={828.500} y={522} right={870} fill="#0af01e" color="#06360a" text="22841" />
                <path d="M754.500 560v8l1.800-1.800 1.200 2.600 1.200-.6-1.200-2.500h2.300z" fill="#fff" stroke="#444" strokeWidth=".8" />
            </svg>
            <ScrollBar />
        </div>
    </div>
)

const ScrollBar = () => (
    <div className="flex h-[8px] shrink-0 items-center justify-between bg-[#ececee] px-[3px]">
        <svg width="3" height="4"><path d="M3 0v4L0 2z" fill="#111" /></svg>
        <svg width="3" height="4"><path d="M0 0v4l3-2z" fill="#111" /></svg>
    </div>
)

const Tabs: React.FC<{ label: string; className: string }> = ({ label, className }) => (
    <div className={`${className} flex flex-1 overflow-hidden border-t border-[#777] bg-[#e2e2e4] text-[7.2px] leading-[9px] text-[#222]`}>
        <div className="h-[10px] border-x border-[#777] bg-white px-[3px]">{label}</div>
        <div className="h-[10px] w-[12px] bg-[#bcbcbc] text-center text-[10px] leading-[8px] font-bold">+</div>
    </div>
)

const App: React.FC = () => {
    return (
        <div className="relative h-[720px] w-[1280px] overflow-hidden bg-black pr-px pl-[29px] font-['Liberation_Sans',Arial,sans-serif]">
            <div className="flex h-[195px] bg-[#e9e9eb]">
                <section className="flex w-[671px] flex-col bg-[#e9e9eb]">
                    <WindowTitle kinds={['blank', 'min', 'max', 'close']} />
                    <div className="mt-px mr-[3px] ml-px h-[184px] overflow-hidden border border-[#888] bg-white">
                        <AnalyzerTable
                            rows={swingRows}
                            cols="grid-cols-[86px_81px_71px_73px_73px_61px_76px_79px_66px]"
                            rowClass="h-[16px] leading-[16px]"
                            headClass="h-[21px] leading-[20px]"
                            total={['', '1071', '$ 8935.00']}
                            signal="Automated swing signal"
                            signalClass="text-[12.3px]"
                            bodyClass="bg-white"
                        />
                    </div>
                </section>
                <section className="flex w-[579px] flex-col overflow-hidden border-l border-[#6b0d18] bg-[#e9e9eb]">
                    <WindowTitle kinds={['blank']} />
                    <div className="mt-px ml-[2px] h-[182px] overflow-hidden border border-r-0 border-[#888] bg-[#dcdcdc]">
                        <AnalyzerTable
                            rows={scalpRows}
                            cols="grid-cols-[92px_69px_67px_58px_60px_60px_65px_73px_80px]"
                            rowClass="h-[15px] leading-[15px]"
                            headClass="h-[20px] leading-[19px]"
                            total={['47545.00', '1297', '$ 10096.25']}
                            signal="Automated Scalp  Signal"
                            signalClass="pl-[28px] text-[10.9px]"
                            bodyClass="bg-[#dcdcdc]"
                        />
                    </div>
                </section>
            </div>

            <div className="flex h-[525px] bg-[#e4e4ea]">
                <section className="mr-[4px] flex w-[382px] flex-col border-t-2 border-[#aaa] bg-[#ececee] pt-[2px]">
                    <Toolbar symbol="ES 06-20" tab="w-[21px]" selects="ml-[9px]" right="-mr-[2px]" kinds={['blank', 'blank', 'min', 'max', 'close']} />
                    <div className="h-px shrink-0 bg-[#888]" />
                    <EsChart />
                    <ScrollBar />
                    <Tabs label="ES 06-20" className="pl-[9px]" />
                </section>
                <section className="mr-[7px] flex w-[474px] flex-col border-t-2 border-[#aaa] bg-[#ececee] pt-[2px]">
                    <Toolbar symbol="NQ 06-20" tab="w-[14px]" selects="ml-[8px]" right="mr-[1px]" kinds={['blank', 'blank', 'min', 'max', 'close']} />
                    <div className="h-px shrink-0 bg-[#888]" />
                    <NqChart />
                    <div className="h-[8px] shrink-0" />
                    <Tabs label="NQ 06-20" className="pl-px" />
                </section>
                <section className="flex w-[383px] flex-col border-t border-[#6b0d18] bg-[#ececee]">
                    <Toolbar symbol="YM 06-20" tab="-ml-[3px] w-[24px]" selects="ml-[9px]" right="" kinds={['blank', 'blank']} />
                    <div className="mt-px h-px shrink-0 bg-[#888]" />
                    <YmChart />
                </section>
            </div>

            <FloatingWindow />
        </div>
    )
}

export default App
